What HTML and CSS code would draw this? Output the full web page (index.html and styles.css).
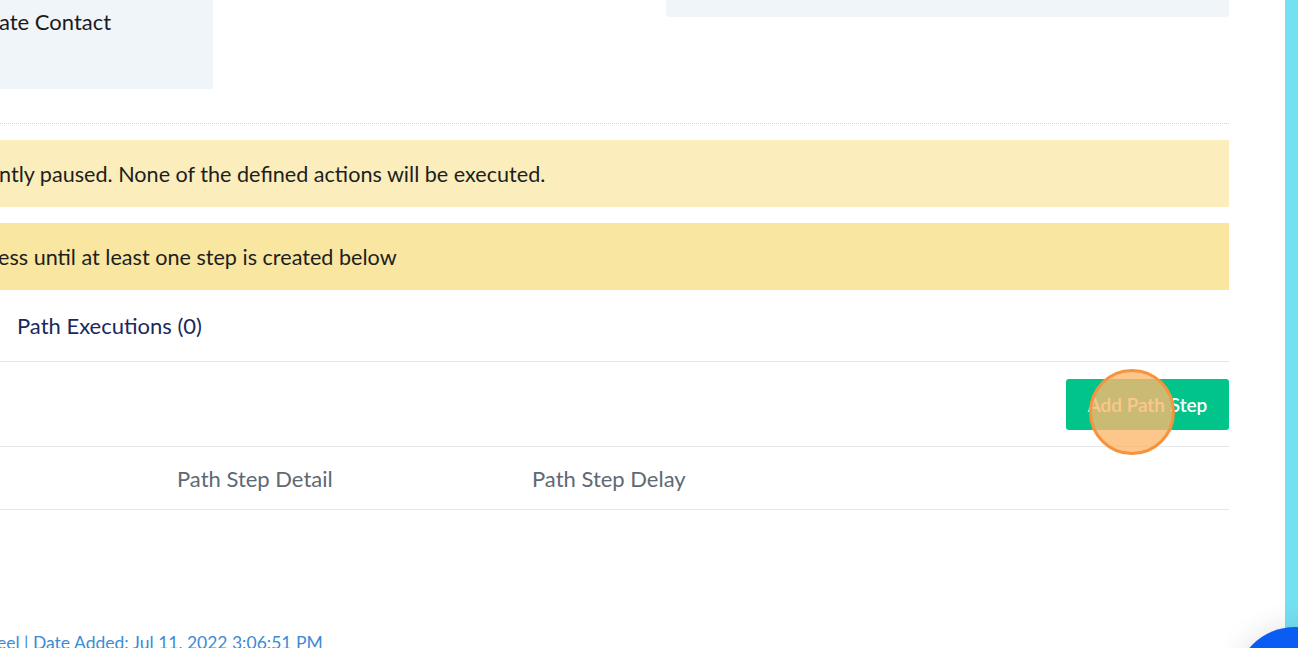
FILE: index.html
```
<!DOCTYPE html>
<html>
<head>
  <title>Path Detail</title>
  <link rel="stylesheet" href="styles.css">
</head>
<body>
  <div class="layout">
    <div class="main">

      <div class="top-row">
        <div class="action-card">
          <div class="action-name">ate Contact</div>
        </div>
        <div class="info-card"></div>
      </div>

      <div class="divider"></div>

      <div class="alert alert-paused">ntly paused. None of the defined actions will be executed.</div>
      <div class="alert alert-empty">ess until at least one step is created below</div>

      <div class="tabs">
        <a class="tab" href="#">Path Executions (0)</a>
      </div>

      <div class="toolbar">
        <button class="btn-add">Add Path Step</button>
        <span class="click-marker"></span>
      </div>

      <div class="steps-head">
        <div class="col col-detail">Path Step Detail</div>
        <div class="col col-delay">Path Step Delay</div>
      </div>

      <div class="meta">eel | Date Added: Jul 11, 2022 3:06:51 PM</div>
    </div>

    <div class="side-bar"></div>
  </div>

  <div class="chat-bubble"></div>
</body>
</html>
```

FILE: styles.css
```
body {
  margin: 0;
  font-family: Lato, "Noto Sans", sans-serif;
  background: #fff;
  overflow: hidden;
  height: 648px;
}

.layout {
  display: flex;
  height: 648px;
}

.main {
  width: 1229px;
  display: flex;
  flex-direction: column;
}
.main > * {
  flex-shrink: 0;
}

.side-bar {
  margin-left: 56px;
  width: 13px;
  background: #74e1f3;
}

/* top cards */
.top-row {
  display: flex;
  height: 89px;
}
.action-card {
  width: 213px;
  background: #eff5f9;
}
.action-name {
  margin: 8px 0 0 -1px;
  font-size: 22px;
  color: #1b1b1b;
}
.info-card {
  margin-left: auto;
  width: 563px;
  height: 17px;
  background: #eff5f9;
  border-radius: 0 0 4px 4px;
}

.divider {
  margin-top: 34px;
  border-top: 1px dotted #d2d5d8;
}

/* alerts */
.alert {
  height: 67px;
  display: flex;
  align-items: center;
  font-size: 21.6px;
  color: #1e1e1e;
}
.alert-paused {
  margin-top: 16px;
  background: #fbeebc;
  text-indent: -1px;
}
.alert-empty {
  margin-top: 16px;
  background: #f8e6a1;
  text-indent: -2px;
}

/* tabs */
.tabs {
  height: 71px;
  display: flex;
  align-items: center;
  border-bottom: 1px solid #e4e7ea;
}
.tab {
  margin-left: 17px;
  font-size: 22px;
  color: #1a2a5c;
  text-decoration: none;
}

/* toolbar */
.toolbar {
  position: relative;
  height: 84px;
  display: flex;
  align-items: center;
  justify-content: flex-end;
  border-bottom: 1px solid #e4e7ea;
}
.btn-add {
  width: 163px;
  height: 51px;
  border: none;
  border-radius: 3px;
  background: #00c48a;
  color: #fff;
  font-family: Lato, "Noto Sans", sans-serif;
  font-size: 19px;
  font-weight: 600;
  cursor: pointer;
}
.click-marker {
  position: absolute;
  right: 54px;
  top: 7px;
  width: 80px;
  height: 80px;
  border: 3px solid #f5933f;
  border-radius: 50%;
  background: rgba(252, 185, 110, 0.8);
}

/* steps table */
.steps-head {
  height: 62px;
  display: flex;
  align-items: center;
  border-bottom: 1px solid #e4e7ea;
  font-size: 22px;
  color: #5e6973;
}
.col-detail {
  margin-left: 177px;
  width: 355px;
}

.meta {
  margin-top: 122px;
  font-size: 17.5px;
  color: #3b8bd4;
  text-indent: -3px;
}

.chat-bubble {
  position: fixed;
  left: 1235px;
  top: 627px;
  width: 120px;
  height: 120px;
  border-radius: 50%;
  background: #0b5cf2;
  box-shadow: 0 0 30px rgba(0, 0, 0, 0.12);
}
```
